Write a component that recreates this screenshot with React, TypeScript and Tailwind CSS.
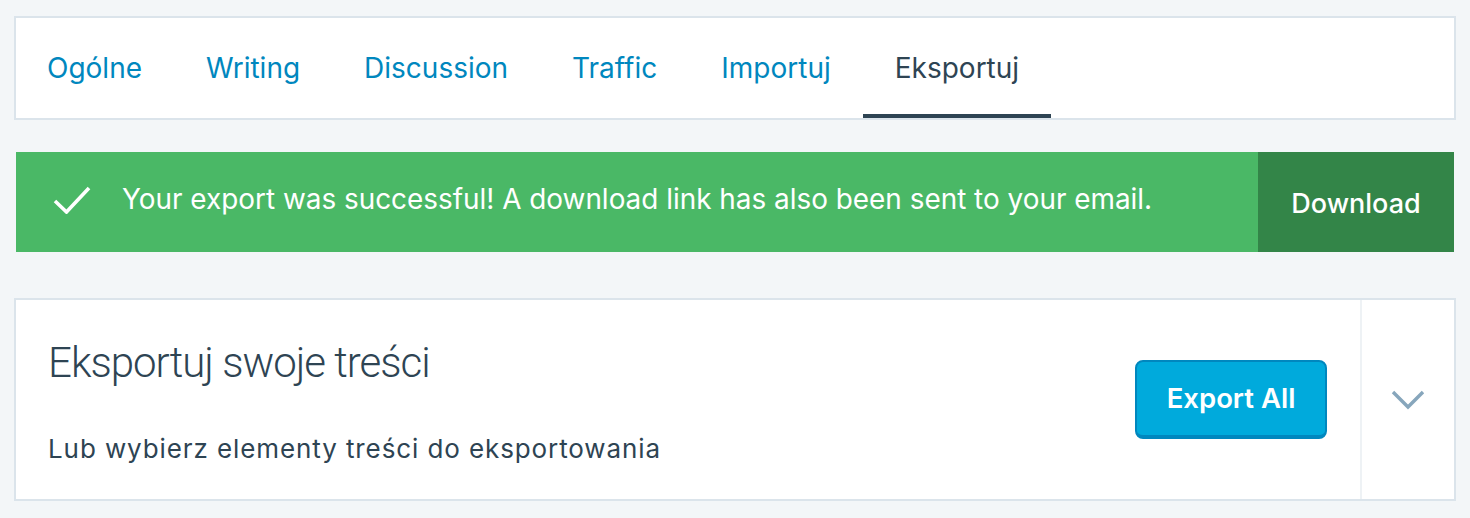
import React from "react";

const tabs = ["Ogólne", "Writing", "Discussion", "Traffic", "Importuj", "Eksportuj"];

export default function App() {
  return (
    <div className="min-h-[518px] bg-[#f3f6f8] px-[14px] pt-[16px] font-['Inter','Noto_Sans',sans-serif] antialiased">
      <nav className="flex h-[104px] items-stretch border-2 border-[#dbe4eb] bg-white">
        <div className="-ml-[1px] flex items-stretch">
          {tabs.map((t, i) => {
            const active = i === tabs.length - 1;
            return (
              <div
                key={t}
                className={
                  active
                    ? "flex items-center border-b-4 border-[#2e4453] px-[32px] pt-[4px] text-[28px] text-[#2e4453]"
                    : "flex items-center border-b-4 border-transparent px-[32px] pt-[4px] text-[28px] text-[#0087be]"
                }
              >
                {t}
              </div>
            );
          })}
        </div>
      </nav>

      <div className="mx-[2px] mt-[32px] flex h-[100px] bg-[#4ab866] text-white">
        <div className="flex flex-1 items-center pb-[4px] pl-[37px]">
          <svg width="38" height="28" viewBox="0 0 38 28" fill="none" className="shrink-0">
            <path d="M2 15 L13.5 26 L36 2" stroke="white" strokeWidth="3.6" strokeLinecap="butt" />
          </svg>
          <span className="ml-[31px] text-[27.9px]">
            Your export was successful! A download link has also been sent to your email.
          </span>
        </div>
        <div className="flex w-[196px] items-center justify-center bg-[#338548] pt-[4px] text-[27px] font-medium">
          Download
        </div>
      </div>

      <div className="mt-[46px] flex h-[203px] border-2 border-[#dbe4eb] bg-white">
        <div className="flex flex-1 flex-col pl-[32px] pt-[42px] text-[#2e4453]">
          <div className="font-['Roboto','Inter',sans-serif] text-[42px] font-light leading-[42px] tracking-[-1px]">
            Eksportuj swoje treści
          </div>
          <div className="mt-[52px] text-[26px] leading-[26px] tracking-[0.9px]">
            Lub wybierz elementy treści do eksportowania
          </div>
        </div>
        <div className="flex items-center pr-[33px]">
          <button className="h-[79px] w-[192px] rounded-[8px] border-2 border-b-4 border-[#0087be] bg-[#00aadc] text-[27.5px] font-semibold text-white">
            Export All
          </button>
        </div>
        <div className="w-[2px] bg-[#eef2f5]" />
        <div className="flex w-[92px] items-center justify-center">
          <svg width="34" height="20" viewBox="0 0 34 20" fill="none">
            <path d="M2 2 L17 17 L32 2" stroke="#87a6bc" strokeWidth="3.4" />
          </svg>
        </div>
      </div>
    </div>
  );
}
